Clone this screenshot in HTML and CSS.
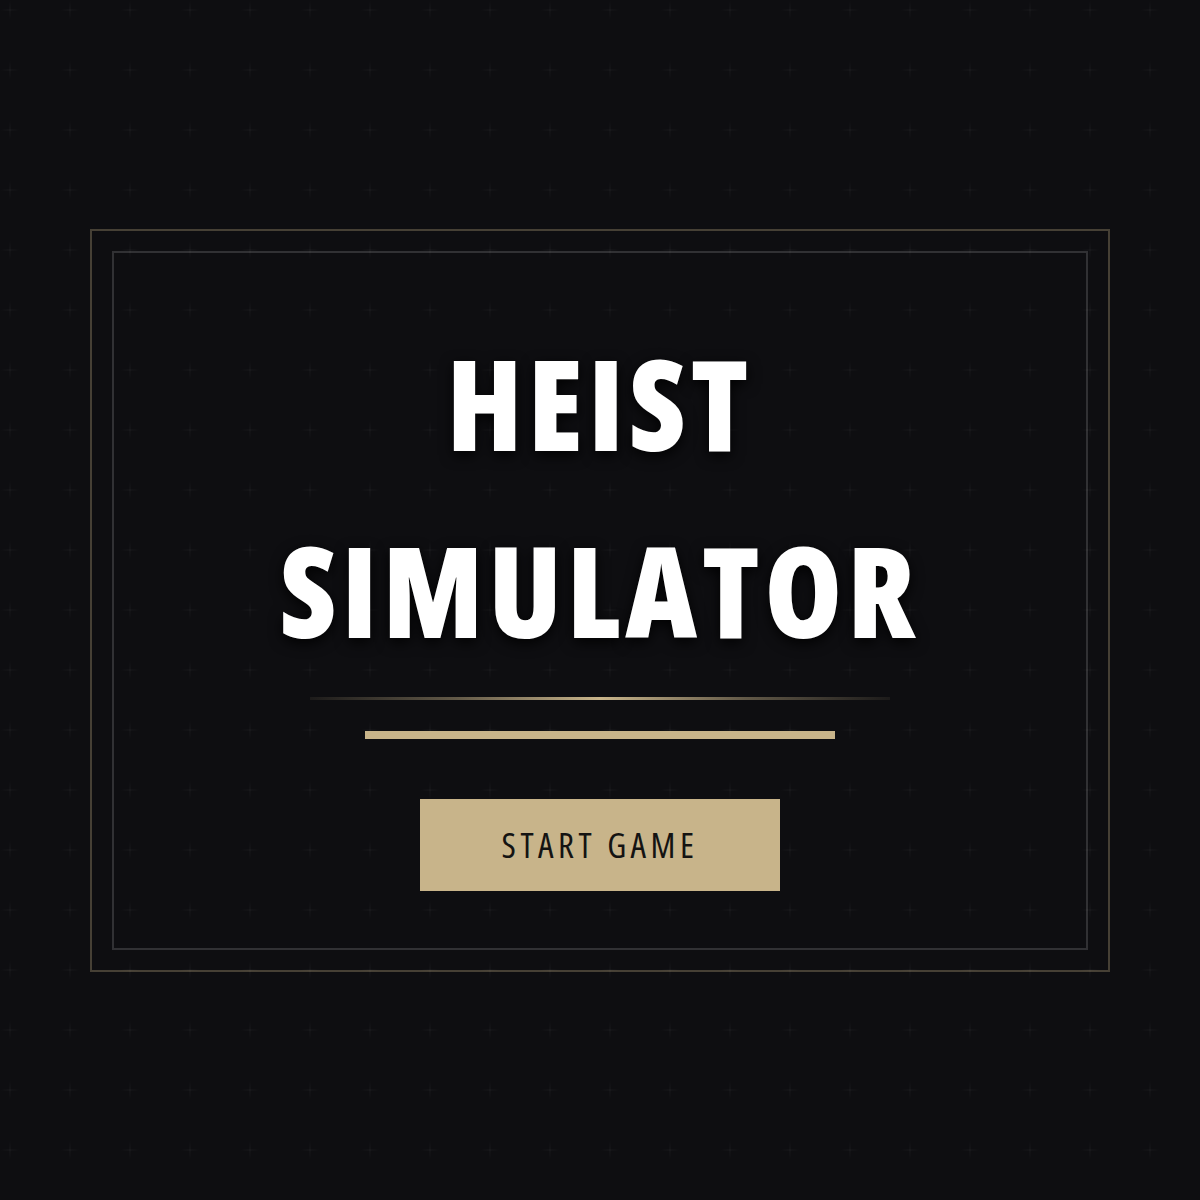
FILE: index.html
```html
<!DOCTYPE html>
<html lang="en">
<head>
    <meta charset="UTF-8">
    <meta name="viewport" content="width=device-width, initial-scale=1.0">
    <title>Heist Simulator</title>
    <link rel="stylesheet" href="styles.css">
</head>
<body>
    <div class="title-screen">
        <div class="frame">
            <div class="frame-inner">
                <h1 class="title">
                    <span class="title-line">HEIST</span>
                    <span class="title-line">SIMULATOR</span>
                </h1>

                <div class="glow-line"></div>
                <div class="gold-bar"></div>

                <button id="startButton" class="start-button">START GAME</button>
            </div>
        </div>
    </div>

    <script>
        // Start button just logs for now
        const startButton = document.getElementById('startButton');
        startButton.addEventListener('click', () => {
            console.log('Game started');
        });
    </script>
</body>
</html>
```
FILE: styles.css
```css
body {
    margin: 0;
    min-height: 100vh;
    background-color: #0e0e11;
    background-image:
        radial-gradient(ellipse 10px 1.5px at 30px 30px, rgba(255,255,255,0.03), transparent),
        radial-gradient(ellipse 1.5px 10px at 30px 30px, rgba(255,255,255,0.03), transparent);
    background-size: 60px 60px;
    background-position: -20px -20px;
    font-family: "Open Sans", "Liberation Sans", sans-serif;
    font-stretch: 75%;
}

.title-screen {
    min-height: 100vh;
    display: flex;
    align-items: center;
    justify-content: center;
}

.frame {
    width: 1020px;
    box-sizing: border-box;
    padding: 20px;
    border: 2px solid rgba(201,181,139,0.3);
}

.frame-inner {
    display: flex;
    flex-direction: column;
    align-items: center;
    padding: 56px 0 57px;
    border: 2px solid rgba(255,255,255,0.15);
}

.title {
    margin: 0;
    color: #fff;
    font-size: 125px;
    font-weight: 800;
    line-height: 187.5px;
    letter-spacing: 5px;
    text-align: center;
    text-shadow: 0 4px 14px rgba(0,0,0,0.9);
}

.title-line {
    display: block;
}

.glow-line {
    width: 580px;
    height: 3px;
    margin-top: 13px;
    background: linear-gradient(90deg, rgba(201,181,139,0.08), rgba(201,181,139,0.45) 25%, #c9b58b 50%, rgba(201,181,139,0.45) 75%, rgba(201,181,139,0.08));
}

.gold-bar {
    width: 470px;
    height: 8px;
    margin-top: 31px;
    background-color: #c8b48a;
}

.start-button {
    width: 360px;
    height: 92px;
    margin-top: 60px;
    padding: 0;
    border: none;
    background-color: #c8b48a;
    color: #141312;
    font-family: inherit;
    font-stretch: 75%;
    font-size: 35px;
    font-weight: 500;
    letter-spacing: 4.5px;
    cursor: pointer;
}
```
